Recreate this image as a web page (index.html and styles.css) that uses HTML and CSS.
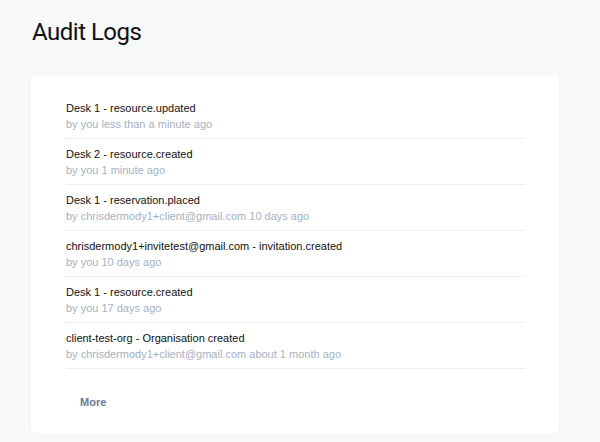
FILE: index.html
```html
<!DOCTYPE html>
<html>
<head>
<meta charset="utf-8">
<link rel="stylesheet" href="styles.css">
</head>
<body>
<main class="page">
  <h1 class="title">Audit Logs</h1>
  <section class="card">
    <ul class="log-list">
      <li class="log-item">
        <div class="log-title">Desk 1 - resource.updated</div>
        <div class="log-meta">by you less than a minute ago</div>
      </li>
      <li class="log-item">
        <div class="log-title">Desk 2 - resource.created</div>
        <div class="log-meta">by you 1 minute ago</div>
      </li>
      <li class="log-item">
        <div class="log-title">Desk 1 - reservation.placed</div>
        <div class="log-meta">by chrisdermody1+client@gmail.com 10 days ago</div>
      </li>
      <li class="log-item">
        <div class="log-title">chrisdermody1+invitetest@gmail.com - invitation.created</div>
        <div class="log-meta">by you 10 days ago</div>
      </li>
      <li class="log-item">
        <div class="log-title">Desk 1 - resource.created</div>
        <div class="log-meta">by you 17 days ago</div>
      </li>
      <li class="log-item">
        <div class="log-title">client-test-org - Organisation created</div>
        <div class="log-meta">by chrisdermody1+client@gmail.com about 1 month ago</div>
      </li>
    </ul>
    <div class="more-row">
      <button class="more-btn">More</button>
    </div>
  </section>
</main>
</body>
</html>
```
FILE: styles.css
```css
html, body {
  margin: 0;
  padding: 0;
  background: #f7f8fa;
}
.page {
  padding: 15px 41px 0 31px;
  font-family: "Liberation Sans", Arial, sans-serif;
}
.title {
  margin: 0 0 0 1px;
  font-family: Roboto, "Liberation Sans", sans-serif;
  font-weight: 400;
  font-size: 24px;
  letter-spacing: -0.5px;
  line-height: 34px;
  color: #111;
  height: 60px;
}
.card {
  background: #fff;
  border-radius: 4px;
  box-shadow: 0 1px 3px rgba(0,0,0,0.06);
  padding: 18px 34px 0 35px;
  height: 358px;
  box-sizing: border-box;
}
.log-list {
  list-style: none;
  margin: 0;
  padding: 0;
}
.log-item {
  padding: 7px 0;
  border-bottom: 1px solid #eceef2;
  height: 31px;
}
.log-title {
  font-size: 11px;
  line-height: 16px;
  color: #111;
}
.log-meta {
  font-size: 11px;
  line-height: 16px;
  color: #a6b0c3;
}
.more-row {
  padding-top: 25px;
}
.more-btn {
  display: block;
  border: 0;
  background: none;
  padding: 0 0 0 14px;
  margin: 0;
  font-family: "Liberation Sans", Arial, sans-serif;
  font-size: 11px;
  font-weight: 700;
  color: #6b7897;
  line-height: 16px;
}
```
